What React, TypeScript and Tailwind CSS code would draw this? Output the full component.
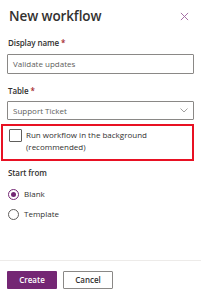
import { useState } from 'react';

export default function App() {
  const [start, setStart] = useState<'blank' | 'template'>('blank');
  const [runInBackground, setRunInBackground] = useState(false);

  return (
    <div
      className="w-[201px] h-[300px] bg-white flex flex-col text-[#323130] overflow-hidden"
      style={{ fontFamily: '"Open Sans", "Noto Sans", sans-serif' }}
    >
      {/* header */}
      <div className="flex items-center justify-between pl-[9px] pr-[12px] pt-[7px] h-[26px]">
        <h2 className="text-[13.5px] font-semibold leading-none tracking-[-0.1px]">New workflow</h2>
        <button className="text-[#a56fa5]">
          <svg width="9" height="9" viewBox="0 0 10 10" fill="none" stroke="currentColor" strokeWidth="1.1">
            <path d="M1 1 L9 9 M9 1 L1 9" />
          </svg>
        </button>
      </div>

      <div className="flex flex-col px-[7px] pt-[13px]">
        {/* display name */}
        <label className="text-[8px] font-semibold leading-none tracking-[-0.1px] pl-[1px] mb-[7px]">
          Display name <span className="text-[#a4262c]">*</span>
        </label>
        <div className="h-[20px] border border-[#8a8886] rounded-[1px] flex items-center px-[5px] text-[8px] text-[#605e5c]">
          Validate updates
        </div>

        {/* table */}
        <label className="text-[8px] font-semibold leading-none tracking-[-0.1px] pl-[1px] mt-[13px] mb-[6px]">
          Table <span className="text-[#a4262c]">*</span>
        </label>
        <div className="h-[19px] border border-[#8a8886] rounded-[1px] flex items-center justify-between px-[5px] text-[8px] text-[#605e5c]">
          <span>Support Ticket</span>
          <svg width="8" height="5" viewBox="0 0 8 5" fill="none" stroke="#8a8886" strokeWidth="0.8">
            <path d="M0.5 0.5 L4 4 L7.5 0.5" />
          </svg>
        </div>
      </div>

      {/* highlighted option */}
      <div className="ml-[1px] mr-[7px] mt-[4px] h-[37px] border-2 border-[#e81123] flex items-start gap-[4px] pl-[6px] pt-[3px]">
        <button
          onClick={() => setRunInBackground(!runInBackground)}
          className="w-[13px] h-[13px] border border-[#605e5c] rounded-[1px] shrink-0"
        />
        <span className="text-[8px] leading-[12px] text-[#323130]">
          Run workflow in the background
          <br />
          (recommended)
        </span>
      </div>

      {/* start from */}
      <div className="flex flex-col px-[8px] pt-[8px]">
        <span className="text-[8px] font-semibold leading-none tracking-[-0.1px] mb-[7px]">Start from</span>
        {(['blank', 'template'] as const).map((opt) => (
          <button
            key={opt}
            onClick={() => setStart(opt)}
            className="flex items-center gap-[5px] h-[20px] text-[8px] text-[#323130]"
          >
            <span
              className={`w-[11px] h-[11px] rounded-full border flex items-center justify-center shrink-0 ${
                start === opt ? 'border-[#742774]' : 'border-[#605e5c]'
              }`}
            >
              {start === opt && <span className="w-[5px] h-[5px] rounded-full bg-[#742774]" />}
            </span>
            {opt === 'blank' ? 'Blank' : 'Template'}
          </button>
        ))}
      </div>

      {/* footer */}
      <div className="mt-auto border-t border-[#edebe9] flex gap-[6px] px-[7px] pt-[10px] pb-[11px]">
        <button className="w-[50px] h-[18px] bg-[#742774] text-white text-[8px] font-semibold rounded-[1px]">
          Create
        </button>
        <button className="w-[50px] h-[18px] border border-[#8a8886] bg-white text-[#323130] text-[8px] font-semibold rounded-[1px]">
          Cancel
        </button>
      </div>
    </div>
  );
}
